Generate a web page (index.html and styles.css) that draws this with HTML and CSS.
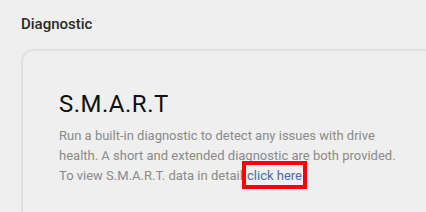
FILE: index.html
```html
<!DOCTYPE html>
<html lang="en">
<head>
    <meta charset="UTF-8">
    <meta name="viewport" content="width=device-width, initial-scale=1.0">
    <title>Diagnostic</title>
    <link rel="stylesheet" href="styles.css">
</head>
<body>
    <div class="page">
        <div class="section-title">Diagnostic</div>

        <div class="card">
            <h1>S.M.A.R.T</h1>
            <p class="desc">
                Run a built-in diagnostic to detect any issues with drive
                health. A short and extended diagnostic are both provided.
                To view S.M.A.R.T. data in detail <a href="#" class="link">click here</a>.
            </p>
        </div>
    </div>
</body>
</html>
```

FILE: styles.css
```css
body, html {
    margin: 0;
    height: 100%;
    background: #efefef;
    font-family: Roboto, "Liberation Sans", sans-serif;
    overflow: hidden;
}
.page {
    padding: 14px 0 0 21px;
}
.section-title {
    font-size: 15px;
    font-weight: 500;
    color: #2a2a2a;
    line-height: 20px;
}
.card {
    margin-top: 15px;
    margin-right: -60px; /* runs off the right edge */
    height: 140px;
    border: 2px solid #e0e0e0;
    border-radius: 12px;
    padding: 38px 36px 0 36px;
}
.card h1 {
    margin: 0;
    font-size: 24px;
    font-weight: 400;
    color: #111;
    letter-spacing: 0.5px;
    line-height: 30px;
}
.desc {
    margin: 7px 0 0 0;
    font-size: 13px;
    line-height: 20px;
    color: #8a8a8a;
    width: 340px;
}
.link {
    color: #4a6bb0;
    text-decoration: none;
    outline: 4px solid #ff0000;
    padding: 3px 1px 2px 1px;
}
```
